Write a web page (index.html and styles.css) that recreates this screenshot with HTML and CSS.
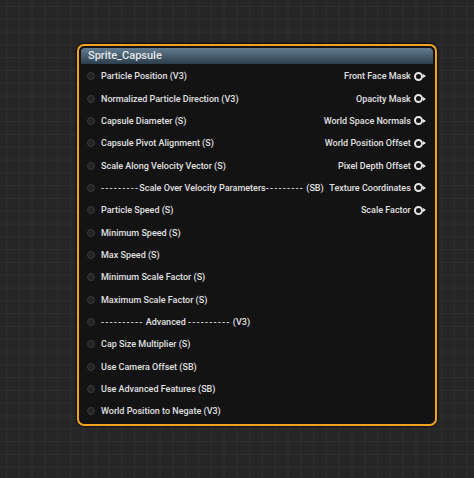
FILE: index.html
```html
<!DOCTYPE html>
<html lang="en">
  <head>
    <meta charset="UTF-8" />
    <title>Sprite_Capsule</title>
    <link rel="stylesheet" href="styles.css">
  </head>
  <body>
    <div class="node">
      <div class="node-title">Sprite_Capsule</div>
      <div class="node-body">
        <ul class="pins inputs">
          <li><span class="pin-in"></span>Particle Position (V3)</li>
          <li><span class="pin-in"></span>Normalized Particle Direction (V3)</li>
          <li><span class="pin-in"></span>Capsule Diameter (S)</li>
          <li><span class="pin-in"></span>Capsule Pivot Alignment (S)</li>
          <li><span class="pin-in"></span>Scale Along Velocity Vector (S)</li>
          <li><span class="pin-in"></span><span class="dash">---------</span>Scale Over Velocity Parameters<span class="dash">---------</span>&nbsp;(SB)</li>
          <li><span class="pin-in"></span>Particle Speed (S)</li>
          <li><span class="pin-in"></span>Minimum Speed (S)</li>
          <li><span class="pin-in"></span>Max Speed (S)</li>
          <li><span class="pin-in"></span>Minimum Scale Factor (S)</li>
          <li><span class="pin-in"></span>Maximum Scale Factor (S)</li>
          <li><span class="pin-in"></span><span class="dash">----------</span>&nbsp;Advanced&nbsp;<span class="dash">----------</span>&nbsp;(V3)</li>
          <li><span class="pin-in"></span>Cap Size Multiplier (S)</li>
          <li><span class="pin-in"></span>Use Camera Offset (SB)</li>
          <li><span class="pin-in"></span>Use Advanced Features (SB)</li>
          <li><span class="pin-in"></span>World Position to Negate (V3)</li>
        </ul>
        <ul class="pins outputs">
          <li>Front Face Mask<span class="pin-out"></span></li>
          <li>Opacity Mask<span class="pin-out"></span></li>
          <li>World Space Normals<span class="pin-out"></span></li>
          <li>World Position Offset<span class="pin-out"></span></li>
          <li>Pixel Depth Offset<span class="pin-out"></span></li>
          <li>Texture Coordinates<span class="pin-out"></span></li>
          <li>Scale Factor<span class="pin-out"></span></li>
        </ul>
      </div>
    </div>
  </body>
</html>
```

FILE: styles.css
```css
html,
body {
  margin: 0;
  height: 100%;
}
body {
  background-color: #262626;
  background-image: linear-gradient(to right, #2f2f2f 1px, transparent 1px),
    linear-gradient(to bottom, #2f2f2f 1px, transparent 1px);
  background-size: 12.8px 12.8px;
  background-position: 6px 6px;
  padding: 44px 0 0 77px;
  box-sizing: border-box;
  font-family: Roboto, "Liberation Sans", sans-serif;
}
.node {
  width: 360px;
  height: 382px;
  box-sizing: border-box;
  border: 2px solid #f2a322;
  border-radius: 7px;
  background-color: #131313;
  padding: 2px;
  box-shadow: 0 0 2px 1px rgba(0, 0, 0, 0.6);
}
.node-title {
  height: 16px;
  line-height: 16px;
  border-radius: 4px 4px 0 0;
  background: linear-gradient(to bottom, #627c90, #2c3e4c);
  color: #e4e8ec;
  font-size: 11px;
  font-weight: 500;
  padding-left: 7px;
}
.node-body {
  display: flex;
  justify-content: space-between;
  padding-top: 1px;
}
.pins {
  list-style: none;
  margin: 0;
  padding: 0;
}
.pins li {
  display: flex;
  align-items: center;
  height: 22.35px;
  color: #e0e0e0;
  font-size: 9px;
  font-weight: 500;
  white-space: nowrap;
}
.inputs {
  padding-left: 6px;
}
.outputs {
  padding-right: 13px;
}
.outputs li {
  justify-content: flex-end;
}
.dash {
  letter-spacing: 1.2px;
}
.pin-in {
  width: 6px;
  height: 6px;
  border-radius: 50%;
  background-color: #232323;
  border: 1px solid #3a3a3a;
  margin-right: 6px;
}
.pin-out {
  position: relative;
  width: 5px;
  height: 5px;
  border-radius: 50%;
  border: 2px solid #e6e6e6;
  margin-left: 3px;
  margin-right: 3px;
}
.pin-out::after {
  content: "";
  position: absolute;
  right: -5px;
  top: 0.5px;
  border-left: 3px solid #e6e6e6;
  border-top: 2px solid transparent;
  border-bottom: 2px solid transparent;
}
```
